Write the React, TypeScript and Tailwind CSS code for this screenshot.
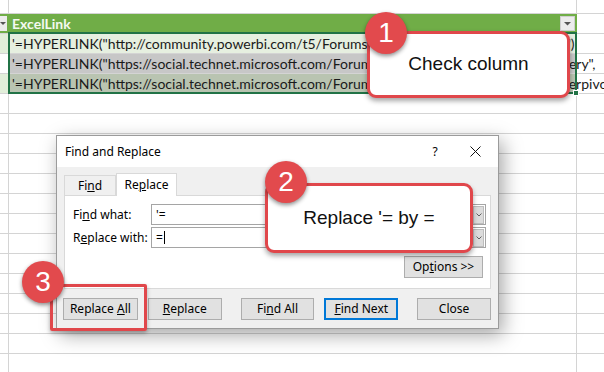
import React from "react";

const cellFont = { fontFamily: "Lato, 'Liberation Sans', sans-serif" };
const uiFont = { fontFamily: "'Segoe UI', 'Noto Sans', sans-serif" };

function Row({
  a,
  b,
  last,
}: {
  a?: React.ReactNode;
  b?: React.ReactNode;
  last?: string;
}) {
  return (
    <div className="flex h-[20px] shrink-0 border-b border-[#d4d4d4]">
      <div className={`w-[9px] shrink-0 border-r border-[#d4d4d4] ${last ?? ""}`}>{a}</div>
      <div className="w-[568px] shrink-0 border-r border-[#d4d4d4]">{b}</div>
      <div className="flex-1" />
    </div>
  );
}

function DataCell({ text, bg }: { text: string; bg: string }) {
  return (
    <div
      className={`h-full pl-[3px] text-[14px] leading-[19px] text-[#1a1a1a] whitespace-nowrap overflow-visible ${bg}`}
      style={cellFont}
    >
      {text}
    </div>
  );
}

function Circle({ n, className }: { n: string; className: string }) {
  return (
    <div
      className={`absolute w-[42px] h-[42px] rounded-full bg-[#e24a4d] text-white flex items-center justify-center text-[28px] shadow-[0_2px_4px_rgba(0,0,0,0.45)] ${className}`}
      style={{ fontFamily: "'Liberation Sans', Arial, sans-serif" }}
    >
      {n}
    </div>
  );
}

function Btn({
  children,
  className,
  primary,
}: {
  children: React.ReactNode;
  className?: string;
  primary?: boolean;
}) {
  return (
    <div
      className={`h-[22px] flex items-center justify-center bg-[#e1e1e1] text-[12px] text-black ${
        primary ? "border-2 border-[#0078d7]" : "border border-[#adadad]"
      } ${className ?? ""}`}
    >
      {children}
    </div>
  );
}

function DropArrow() {
  return (
    <div className="w-[11px] h-[18px] bg-[#dcdcdc] border border-[#bdbdbd] flex items-center justify-center">
      <svg width="6" height="4" viewBox="0 0 6 4">
        <path d="M0.5 0.5 L3 3 L5.5 0.5" fill="none" stroke="#606060" strokeWidth="1" />
      </svg>
    </div>
  );
}

export default function App() {
  const empties = Array.from({ length: 14 });
  return (
    <div className="relative w-[604px] h-[372px] overflow-hidden bg-white">
      {/* spreadsheet grid */}
      <div className="flex flex-col -mt-[6px]">
        <Row />
        {/* header */}
        <div className="flex h-[20px] shrink-0 border-b border-[#d4d4d4]">
          <div className="w-[9px] shrink-0 bg-[#70ad47] pt-[2px]">
            <div className="w-[7px] h-[15px] bg-[#ececec] flex items-center justify-start">
              <svg width="6" height="4" viewBox="0 0 6 4">
                <path d="M0 0 L6 0 L3 3 Z" fill="#555" />
              </svg>
            </div>
          </div>
          <div className="w-[568px] shrink-0 bg-[#70ad47] flex items-center justify-between pl-[3px] pr-[2px]">
            <span className="text-[14px] font-bold text-[#f4f9f0] leading-[19px]" style={cellFont}>
              ExcelLink
            </span>
            <div className="w-[15px] h-[15px] bg-[#ececec] border border-[#cfcfcf] flex items-center justify-center">
              <svg width="7" height="4" viewBox="0 0 7 4">
                <path d="M0 0 L7 0 L3.5 3.5 Z" fill="#555" />
              </svg>
            </div>
          </div>
          <div className="flex-1" />
        </div>
        <Row
          last="bg-[#e2efda]"
          b={
            <DataCell
              bg="bg-[#e6efe0]"
              text={`'=HYPERLINK("http://community.powerbi.com/t5/Forums/ct-p/PBI_Comm_Forums", "Link")`}
            />
          }
        />
        <Row
          b={
            <DataCell
              bg="bg-[#c7c7c7]"
              text={`'=HYPERLINK("https://social.technet.microsoft.com/Forums/en-US/home?forum=powerquery",`}
            />
          }
        />
        <Row
          last="bg-[#e2efda]"
          b={
            <DataCell
              bg="bg-[#b9c4b1]"
              text={`'=HYPERLINK("https://social.technet.microsoft.com/Forums/en-US/home?forum=sqlkjpowerpivotforexcel")`}
            />
          }
        />
        {empties.map((_, i) => (
          <Row key={i} />
        ))}
      </div>

      {/* selection */}
      <div className="absolute left-[8px] top-[32px] w-[569px] h-[62px] border-2 border-[#217346] pointer-events-none" />
      <div className="absolute left-[573px] top-[90px] w-[6px] h-[6px] bg-[#217346] border border-white" />

      {/* callout 1 */}
      <div className="absolute left-[367px] top-[31px] w-[203px] h-[67px] rounded-[9px] border-[3px] border-[#e0474b] bg-white shadow-[0_3px_5px_rgba(0,0,0,0.35)] flex items-center justify-center">
        <span className="text-[19px] text-[#111]" style={{ fontFamily: "'Liberation Sans', Arial, sans-serif" }}>
          Check column
        </span>
      </div>
      <Circle n="1" className="left-[365px] top-[12px]" />

      {/* dialog */}
      <div
        className="absolute left-[56px] top-[135px] w-[443px] h-[194px] border border-[#9b9b9b] bg-[#f0f0f0] flex flex-col shadow-[4px_6px_18px_rgba(0,0,0,0.35)]"
        style={uiFont}
      >
        <div className="h-[31px] shrink-0 bg-white flex items-center pl-[8px] text-[12px] text-black">
          <span className="flex-1">Find and Replace</span>
          <span className="w-[20px] text-center text-[12px] mr-[25px]">?</span>
          <svg className="mr-[17px]" width="11" height="11" viewBox="0 0 11 11">
            <path d="M0.5 0.5 L10.5 10.5 M10.5 0.5 L0.5 10.5" stroke="#111" strokeWidth="1" />
          </svg>
        </div>
        <div className="flex-1 flex flex-col px-[7px] pt-[6px]">
          <div className="flex items-end h-[22px]">
            <div className="w-[52px] h-[20px] border border-b-0 border-[#d9d9d9] bg-[#f0f0f0] flex items-center justify-center text-[12px]">
              <span>
                Fi<u>n</u>d
              </span>
            </div>
            <div className="w-[61px] h-[23px] -mb-px z-10 border border-b-0 border-[#d9d9d9] bg-white flex items-center justify-center text-[12px]">
              <span>
                Re<u>p</u>lace
              </span>
            </div>
          </div>
          <div className="w-[427px] h-[94px] shrink-0 bg-white border border-[#d9d9d9] relative flex flex-col pl-[8px] pt-[8px] text-[12px]">
            <div className="flex items-center h-[21px]">
              <span className="w-[78px]">
                Fi<u>n</u>d what:
              </span>
              <div className="w-[335px] h-[21px] border border-[#a5a5a5] flex items-center justify-between pl-[4px] pr-[1px]">
                <span>'=</span>
                <DropArrow />
              </div>
            </div>
            <div className="flex items-center h-[21px] mt-[2px]">
              <span className="w-[78px]">
                R<u>e</u>place with:
              </span>
              <div className="w-[335px] h-[21px] border border-[#a5a5a5] flex items-center justify-between pl-[4px] pr-[1px]">
                <span className="flex items-center">
                  =<span className="inline-block w-px h-[13px] bg-black ml-px" />
                </span>
                <DropArrow />
              </div>
            </div>
            <div className="flex justify-end pr-[7px] mt-[8px]">
              <Btn className="w-[79px]">
                <span>
                  Op<u>t</u>ions &gt;&gt;
                </span>
              </Btn>
            </div>
          </div>
          <div className="flex items-center mt-[9px] -ml-px">
            <Btn className="w-[75px]">
              <span>
                Replace <u>A</u>ll
              </span>
            </Btn>
            <Btn className="w-[74px] ml-[10px]">
              <span>
                <u>R</u>eplace
              </span>
            </Btn>
            <Btn className="w-[74px] ml-[19px]">
              <span>
                Fi<u>n</u>d All
              </span>
            </Btn>
            <Btn className="w-[74px] ml-[10px]" primary>
              <span>
                <u>F</u>ind Next
              </span>
            </Btn>
            <Btn className="w-[74px] ml-[19px]">
              <span>Close</span>
            </Btn>
          </div>
        </div>
      </div>

      {/* callout 2 */}
      <div className="absolute left-[265px] top-[183px] w-[208px] h-[70px] rounded-[9px] border-[3px] border-[#e0474b] bg-white shadow-[0_3px_5px_rgba(0,0,0,0.35)] flex items-center justify-center">
        <span className="text-[19px] text-[#111]" style={{ fontFamily: "'Liberation Sans', Arial, sans-serif" }}>
          Replace '= by =
        </span>
      </div>
      <Circle n="2" className="left-[265px] top-[161px]" />

      {/* box 3 */}
      <div className="absolute left-[50px] top-[284px] w-[97px] h-[47px] rounded-[2px] border-[3px] border-[#e0474b] shadow-[0_2px_4px_rgba(0,0,0,0.3)]" />
      <Circle n="3" className="left-[22px] top-[261px]" />
    </div>
  );
}
